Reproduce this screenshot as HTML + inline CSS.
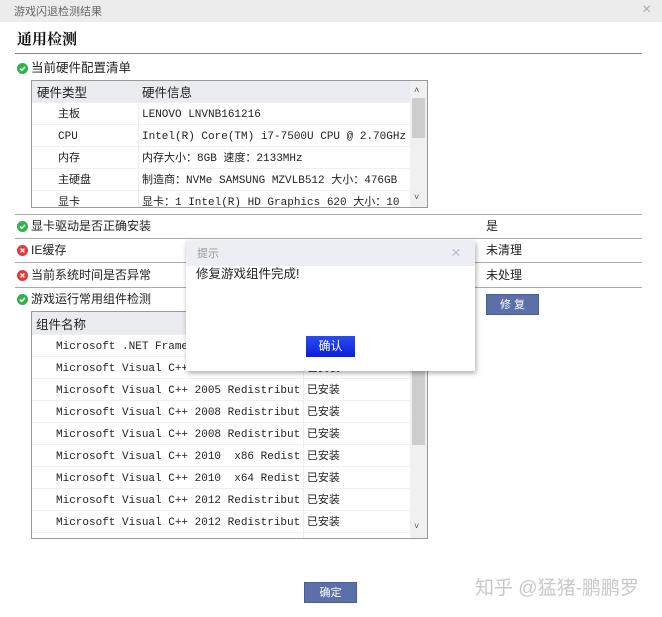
<!DOCTYPE html>
<html><head><meta charset="utf-8"><style>
*{margin:0;padding:0;box-sizing:border-box}
body{width:662px;height:617px;background:#fff;position:relative;overflow:hidden;font-family:"Liberation Sans","Noto Sans CJK SC",sans-serif;font-size:12px;color:#222}
.a{position:absolute;white-space:pre;line-height:16px}
.mono{font-family:"Liberation Mono","Noto Sans CJK SC",monospace;font-size:11px;color:#222;line-height:16px}
.hl{position:absolute;left:15px;width:627px;height:1px;background:#aaa}
.ic{position:absolute;width:11px;height:11px}
.tbl{position:absolute;left:31px;width:397px;border:1px solid #999;background:#fff;overflow:hidden}
.row{position:absolute;left:0;width:378px;height:22px;border-bottom:1px solid #f0f0f0}
.sb{position:absolute;right:0;top:0;width:17px;bottom:0;background:#f0f0f0}
.th{position:absolute;right:2px;width:13px;background:#cdcdcd}
.btn{position:absolute;background:#5b6fa8;color:#fff;text-align:center;font-size:11px;line-height:20px;border:1px solid #4a5d94}
</style></head><body>
<svg width="0" height="0" style="position:absolute"><defs>
<symbol id="ok" viewBox="0 0 11 11"><circle cx="5.5" cy="5.5" r="5.5" fill="#2fb24a"/><path d="M3 5.6 L4.8 7.3 L8 3.9" stroke="#fff" stroke-width="1.6" fill="none"/></symbol>
<symbol id="bad" viewBox="0 0 11 11"><circle cx="5.5" cy="5.5" r="5.5" fill="#e23a3a"/><path d="M3.6 3.6 L7.4 7.4 M7.4 3.6 L3.6 7.4" stroke="#fff" stroke-width="1.5"/></symbol>
</defs></svg>
<div class="a" style="left:0;top:0;width:662px;height:22px;background:#ececec"></div>
<div class="a" style="left:14px;top:4px;font-size:11px;color:#666">游戏闪退检测结果</div>
<div class="a" style="left:642px;top:2px;font-size:16px;color:#aaa">×</div>
<div class="a" style="left:17px;top:29px;line-height:20px;font-size:15px;font-weight:bold;color:#111;font-family:'Noto Serif CJK SC',serif">通用检测</div>
<div class="hl" style="top:53px;background:#888"></div>
<svg class="ic" style="left:17px;top:63px"><use href="#ok"/></svg>
<div class="a" style="left:31px;top:60px;font-size:12.5px">当前硬件配置清单</div>

<div class="tbl" style="top:80px;height:128px">
 <div class="row" style="top:0;height:22px;background:#e9ebf1"></div>
 <div class="a" style="left:5px;top:4px;font-size:12.5px">硬件类型</div>
 <div class="a" style="left:110px;top:4px;font-size:12.5px">硬件信息</div>
 <div class="a" style="left:106px;top:22px;width:1px;height:110px;background:#eee"></div>
 <div class="row" style="top:22px"></div><div class="row" style="top:44px"></div><div class="row" style="top:66px"></div><div class="row" style="top:88px"></div>
 <div class="a mono" style="left:26px;top:26px">主板</div><div class="a mono" style="left:110px;top:26px">LENOVO LNVNB161216</div>
 <div class="a mono" style="left:26px;top:48px">CPU</div><div class="a mono" style="left:110px;top:48px">Intel(R) Core(TM) i7-7500U CPU @ 2.70GHz</div>
 <div class="a mono" style="left:26px;top:70px">内存</div><div class="a mono" style="left:110px;top:70px">内存大小：8GB 速度：2133MHz</div>
 <div class="a mono" style="left:26px;top:92px">主硬盘</div><div class="a mono" style="left:110px;top:92px">制造商：NVMe SAMSUNG MZVLB512 大小：476GB</div>
 <div class="a mono" style="left:26px;top:114px">显卡</div><div class="a mono" style="left:110px;top:114px">显卡：1 Intel(R) HD Graphics 620 大小：10</div>
 <div class="sb"><div class="a" style="left:4px;top:1px;font-size:9px;color:#555">˄</div><div class="th" style="top:17px;height:40px"></div><div class="a" style="left:4px;top:108px;font-size:9px;color:#555">˅</div></div>
</div>

<div class="hl" style="top:214px"></div>
<svg class="ic" style="left:17px;top:221px"><use href="#ok"/></svg>
<div class="a" style="left:31px;top:218px">显卡驱动是否正确安装</div>
<div class="a" style="left:486px;top:218px">是</div>
<div class="hl" style="top:238px"></div>
<svg class="ic" style="left:17px;top:245px"><use href="#bad"/></svg>
<div class="a" style="left:31px;top:242px">IE缓存</div>
<div class="a" style="left:486px;top:242px">未清理</div>
<div class="hl" style="top:262px"></div>
<svg class="ic" style="left:17px;top:270px"><use href="#bad"/></svg>
<div class="a" style="left:31px;top:267px">当前系统时间是否异常</div>
<div class="a" style="left:486px;top:267px">未处理</div>
<div class="hl" style="top:287px"></div>
<svg class="ic" style="left:17px;top:294px"><use href="#ok"/></svg>
<div class="a" style="left:31px;top:291px">游戏运行常用组件检测</div>
<div class="btn" style="left:486px;top:294px;width:53px;height:21px">修 复</div>

<div class="tbl" style="top:311px;height:228px">
 <div class="row" style="top:0;height:23px;background:#e9ebf1"></div>
 <div class="a" style="left:4px;top:5px;font-size:12.5px">组件名称</div>
 <div class="a" style="left:271px;top:23px;width:1px;height:210px;background:#eee"></div>
 <div class="row" style="top:23px"></div><div class="row" style="top:45px"></div><div class="row" style="top:67px"></div><div class="row" style="top:89px"></div><div class="row" style="top:111px"></div><div class="row" style="top:133px"></div><div class="row" style="top:155px"></div><div class="row" style="top:177px"></div><div class="row" style="top:199px"></div>
 <div class="a mono" style="left:24px;top:27px">Microsoft .NET Framework</div>
 <div class="a mono" style="left:24px;top:49px">Microsoft Visual C++ 2005 Redistribut 已安装</div>
 <div class="a mono" style="left:24px;top:71px">Microsoft Visual C++ 2005 Redistribut 已安装</div>
 <div class="a mono" style="left:24px;top:93px">Microsoft Visual C++ 2008 Redistribut 已安装</div>
 <div class="a mono" style="left:24px;top:115px">Microsoft Visual C++ 2008 Redistribut 已安装</div>
 <div class="a mono" style="left:24px;top:137px">Microsoft Visual C++ 2010  x86 Redist 已安装</div>
 <div class="a mono" style="left:24px;top:159px">Microsoft Visual C++ 2010  x64 Redist 已安装</div>
 <div class="a mono" style="left:24px;top:181px">Microsoft Visual C++ 2012 Redistribut 已安装</div>
 <div class="a mono" style="left:24px;top:203px">Microsoft Visual C++ 2012 Redistribut 已安装</div>
 <div class="sb"><div class="th" style="top:20px;height:113px"></div><div class="a" style="left:4px;top:206px;font-size:9px;color:#555">˅</div></div>
</div>

<div class="a" style="left:186px;top:241px;width:289px;height:130px;background:#fff;box-shadow:1px 2px 5px rgba(0,0,0,.35)"></div>
<div class="a" style="left:186px;top:241px;width:289px;height:25px;background:#eceef3"></div>
<div class="a" style="left:197px;top:246px;font-size:11px;color:#999">提示</div>
<div class="a" style="left:451px;top:245px;font-size:17px;color:#b8bccc">×</div>
<div class="a" style="left:196px;top:266px;font-size:12.5px">修复游戏组件完成!</div>
<div class="a" style="left:306px;top:336px;width:49px;height:21px;background:linear-gradient(#2a4cf0,#0b1fd8);color:#fff;text-align:center;line-height:21px;font-size:12px">确认</div>

<div class="btn" style="left:304px;top:582px;width:53px;height:21px">确定</div>
<div class="a" style="left:475px;top:577px;line-height:24px;font-size:19px;color:#c8c8c8">知乎 @猛猪-鹏鹏罗</div>
</body></html>
